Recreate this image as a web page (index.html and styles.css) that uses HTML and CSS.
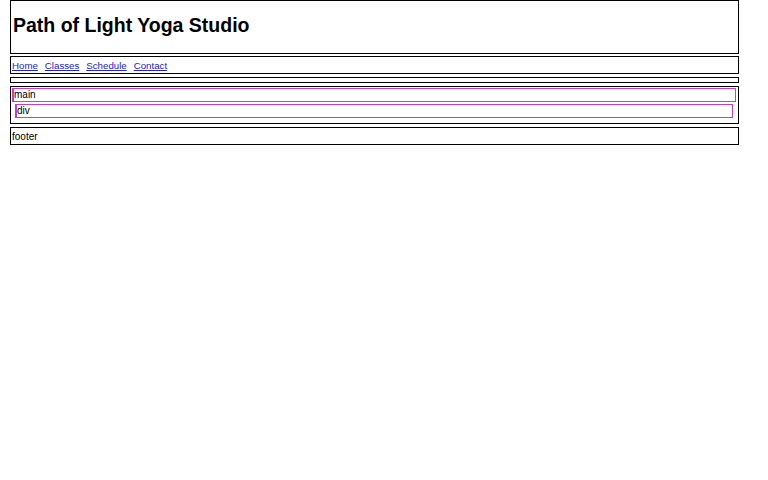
FILE: index.html
```html
<!DOCTYPE html>
<html>
<head>
<meta charset="utf-8">
<link rel="stylesheet" href="styles.css">
</head>
<body>
<div class="page">
  <header class="site-header"><h1 class="title">Path of Light Yoga Studio</h1></header>
  <nav class="site-nav"><a href="#">Home</a> <a href="#">Classes</a> <a href="#">Schedule</a> <a href="#">Contact</a></nav>
  <section class="empty"></section>
  <main class="site-main">
    <div class="tag">main</div>
    <div class="inner"><div class="tag2">div</div></div>
  </main>
  <footer class="site-footer">footer</footer>
</div>
</body>
</html>
```
FILE: styles.css
```css
html, body { margin: 0; padding: 0; background: #fff; }
body { font-family: "Liberation Sans", Arial, sans-serif; font-size: 10px; color: #000; }
* { box-sizing: border-box; }
.page { width: 729px; margin-left: 10px; display: flex; flex-direction: column; }
.site-header { height: 54px; border: 1px solid #000; display: flex; align-items: center; padding-left: 2px; padding-bottom: 0; }
.title { margin: 0; font-size: 19.5px; font-weight: bold; line-height: 1; position: relative; top: -1px; }
.site-nav { height: 18px; margin-top: 2px; border: 1px solid #000; padding-left: 1px; display: flex; align-items: center; gap: 7px; font-size: 9.7px; }
.site-nav a { color: #2222cc; text-decoration: underline; }
.empty { height: 6px; margin-top: 3px; border: 1px solid #000; }
.site-main { height: 38px; margin-top: 3px; border: 1px solid #000; padding: 1px 2px 0 1px; display: flex; flex-direction: column; gap: 2px; }
.tag { height: 14px; border: 1px solid #c83cc8; border-left-width: 2px; line-height: 12px; }
.inner { padding: 0 3px; }
.tag2 { height: 14px; border: 1px solid #c83cc8; border-left-width: 2px; line-height: 12px; padding-left: 0; }
.site-footer { height: 18px; margin-top: 3px; border: 1px solid #000; padding-left: 1px; display: flex; align-items: center; }
```
